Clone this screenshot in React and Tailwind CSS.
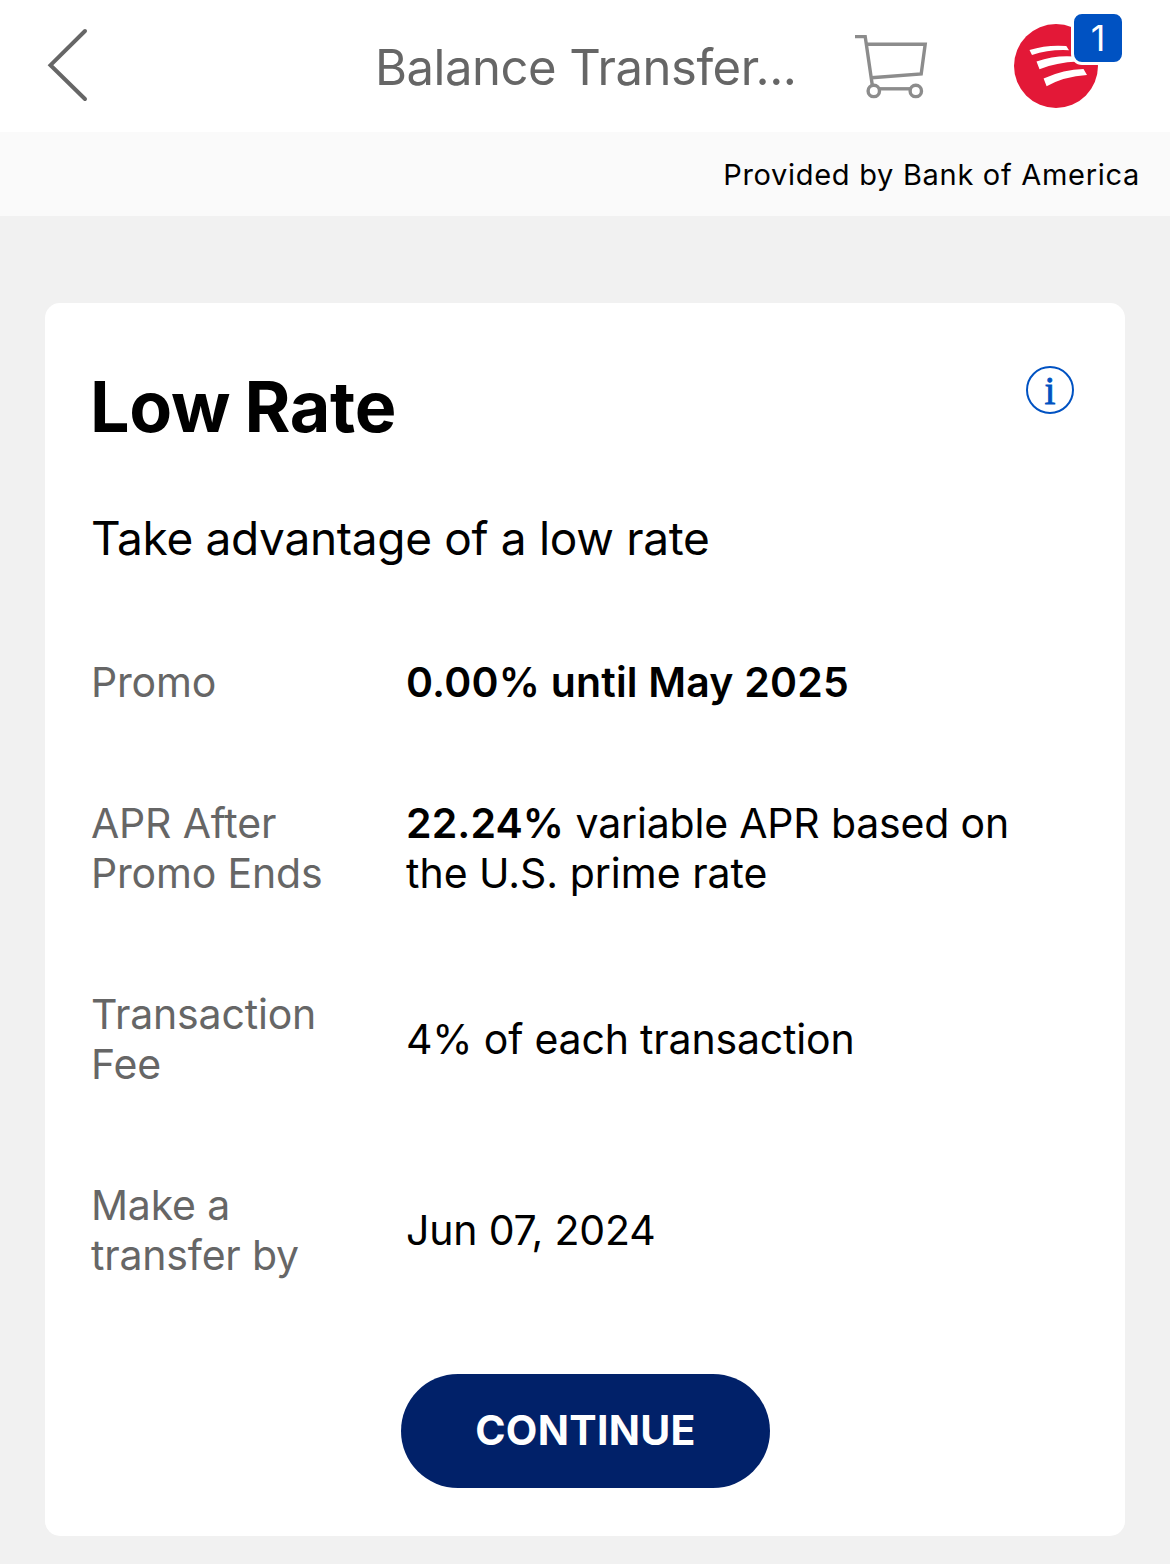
import React from 'react';

// ===============================================
// ICONS
// ===============================================

const BackIcon = () => (
  <svg width="44" height="76" viewBox="0 0 44 76" fill="none" stroke="#666666" strokeWidth="4" strokeLinecap="round">
    <path d="M40 3 L5.5 37.2 L40 71" />
  </svg>
);

const CartIcon = () => (
  <svg width="74" height="66" viewBox="0 0 74 66" fill="none" stroke="#8c8c8c" strokeWidth="3.4">
    <path d="M0 3.6 H10.2 L17.3 52.3" />
    <path d="M11.5 11.2 H70.2 L66.2 41 L16.5 44.8" />
    <path d="M25 55.8 H55" />
    <circle cx="18.8" cy="57.9" r="5.7" />
    <circle cx="60.8" cy="57.9" r="5.7" />
  </svg>
);

const BrandIcon = () => (
  <svg width="84" height="84" viewBox="0 0 84 84">
    <circle cx="42" cy="42" r="42" fill="#e31837" />
    <g fill="#fff">
      <path d="M15.5 26 Q33 20.5 52.3 22 L55 26.2 Q35 25.2 18 31 Z" />
      <path d="M22.5 37.5 Q41 31 60 32.5 L64 37.6 Q42 38.5 25.5 45.3 Z" />
      <path d="M29.6 54.5 Q50 45.2 69.5 45 L73 51 Q50 52.5 32.6 62.2 Z" />
    </g>
  </svg>
);

const InfoIcon = () => (
  <svg width="48" height="48" viewBox="0 0 48 48">
    <circle cx="24" cy="24" r="23" fill="none" stroke="#0052c2" strokeWidth="2" />
    <text
      x="24"
      y="37.5"
      textAnchor="middle"
      fontSize="39.5"
      fill="#0052c2"
      stroke="#0052c2"
      strokeWidth="0.8"
      fontFamily="'Liberation Serif', serif"
    >
      i
    </text>
  </svg>
);

// ===============================================
// OFFER DATA
// ===============================================

const offerRows = [
  { label: ['Promo'], value: <b className="font-semibold tracking-[0.2px]">0.00% until May 2025</b> },
  {
    label: ['APR After', 'Promo Ends'],
    value: (
      <>
        <b className="font-semibold tracking-[0.1px]">22.24%</b> variable APR based on
        <br />
        <span className="tracking-normal">the U.S. prime rate</span>
      </>
    )
  },
  { label: ['Transaction', 'Fee'], value: '4% of each transaction' },
  { label: ['Make a', 'transfer by'], value: 'Jun 07, 2024' }
];

const Header = () => (
  <header className="grid h-[132px] grid-cols-[375px_420px_1fr] items-center bg-white">
    <button className="ml-[45px] w-11" aria-label="Back">
      <BackIcon />
    </button>
    <h1 className="whitespace-nowrap pt-1 text-[49px] tracking-[-0.5px] text-[#666666]">Balance Transfer...</h1>
    <div className="flex items-center justify-between pl-[60px] pr-[72px]">
      <CartIcon />
      <div className="relative">
        <BrandIcon />
        <span className="absolute -right-[27px] -top-[13px] flex size-[54px] items-center justify-center rounded-[11px] border-3 border-white bg-[#0052c2] text-[36px] text-white">
          1
        </span>
      </div>
    </div>
  </header>
);

const OfferRow = ({ label, value }) => (
  <div className="flex items-center">
    <dt className="w-[315px] shrink-0 text-[#666666]">
      {label.map((line) => (
        <span key={line} className="block">
          {line}
        </span>
      ))}
    </dt>
    <dd className="whitespace-nowrap">{value}</dd>
  </div>
);

export default function App() {
  return (
    <div className="flex h-[1564px] w-[1170px] flex-col bg-[#f1f1f1] font-['Inter',sans-serif] text-black">
      <Header />
      <div className="flex h-[84px] items-center justify-end bg-[#fafafa] pr-[30px]">
        <p className="pt-0.5 text-[29px] tracking-[0.7px]">Provided by Bank of America</p>
      </div>

      <main className="mx-[45px] mt-[87px] flex h-[1233px] flex-col rounded-[15px] bg-white pl-[46px] pr-[51px] pt-[63px]">
        <div className="flex h-[84px] justify-between">
          <h2 className="-ml-px -mt-px text-[70px] font-bold leading-[84px] tracking-[-0.3px] [word-spacing:-2px]">
            Low Rate
          </h2>
          <InfoIcon />
        </div>
        <p className="mt-[60px] text-[46px] leading-[56px] tracking-[-0.32px]">Take advantage of a low rate</p>

        <dl className="mt-[91px] flex flex-col gap-[91px] text-[41px] leading-[50px] tracking-[-0.18px]">
          {offerRows.map((row) => (
            <OfferRow key={row.label[0]} {...row} />
          ))}
        </dl>

        <button className="ml-[310px] mt-[94px] h-[114px] w-[369px] rounded-full bg-[#012169] text-[41px] font-bold tracking-[0.3px] text-white">
          CONTINUE
        </button>
      </main>
    </div>
  );
}
